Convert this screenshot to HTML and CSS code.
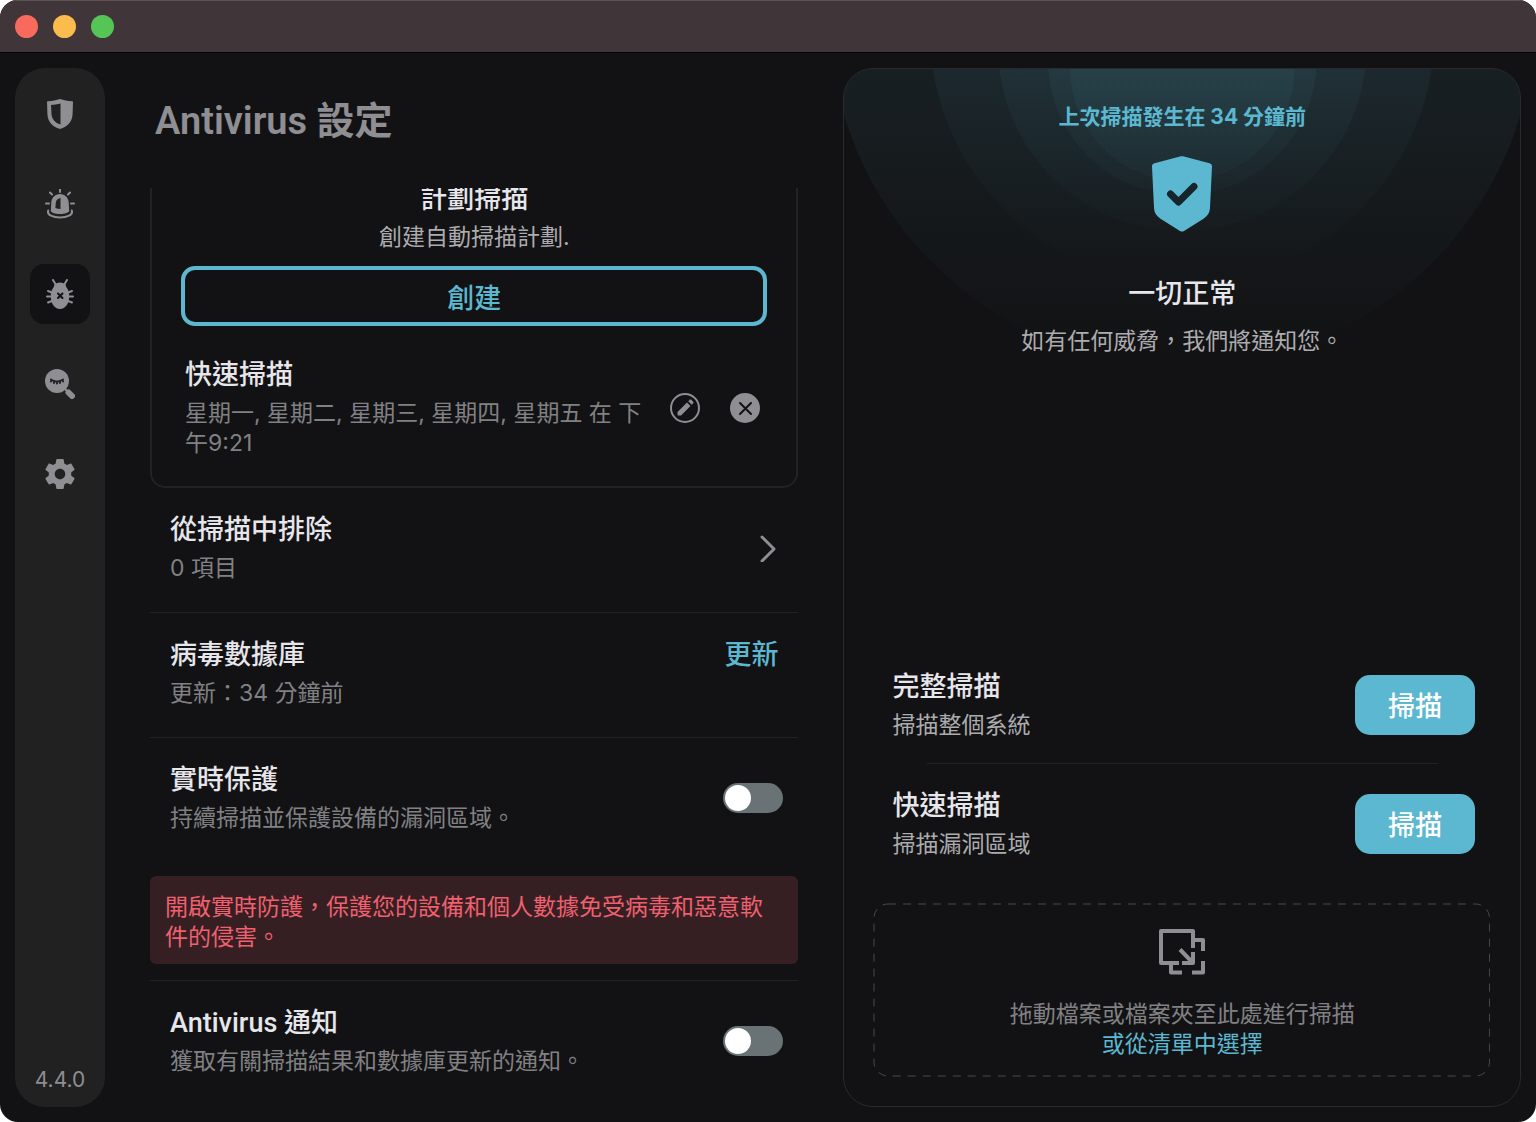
FILE: index.html
```html
<!DOCTYPE html>
<html lang="zh-Hant">
<head>
    <meta charset="UTF-8">
    <meta name="viewport" content="width=device-width, initial-scale=1.0">
    <title>Antivirus 設定</title>
    <link rel="stylesheet" href="styles.css">
</head>
<body>
    <div class="window">
        <header class="titlebar">
            <button type="button" class="light close" aria-label="關閉"></button>
            <button type="button" class="light minimize" aria-label="最小化"></button>
            <button type="button" class="light zoom" aria-label="縮放"></button>
        </header>
        <div class="content">
            <aside class="sidebar">
                <nav class="nav">
                    <a href="#protection" aria-label="保護">
                        <svg width="30" height="30" viewBox="0 0 30 30" fill="currentColor">
                            <path fill-rule="evenodd" d="M15 0C18.500 1.300 23 2 27.200 2.200c.5 0 .8.400.8.800L27.600 15c-.3 7.500-4.800 13-12.600 15C7.200 28 2.700 22.500 2.400 15L2 3c0-.4.300-.8.800-.8C7 2 11.500 1.300 15 0zM15.500 4.500C12.500 5.300 9 5.800 6 6l.5 9c.3 5 3.500 9 9 10.500z"/>
                        </svg>
                    </a>
                    <a href="#alerts" aria-label="警報">
                        <svg width="30" height="30" viewBox="0 0 30 30" fill="none" stroke="currentColor" stroke-width="2" stroke-linecap="round">
                            <path fill="currentColor" fill-rule="evenodd" stroke="none" d="M15 5c5 0 8.500 3.800 8.700 8.500L24.200 22c0 1.500-4.200 3-9.200 3s-9.200-1.500-9.200-3l.5-8.500C6.500 8.800 10 5 15 5zM15.500 9c-3 .5-4.700 2.500-4.800 5.500l-.3 4.500c1.500.7 3.200 1 5.100 1z"/>
                            <path d="M3.200 21.500c-1.500 4.500 4.800 7 11.800 7s13.300-2.500 11.800-7M15 0v3M1 14.500h3M26 14.500h3M5 3.500l2 2M25 3.500l-2 2"/>
                        </svg>
                    </a>
                    <a href="#antivirus" class="active" aria-label="Antivirus" aria-current="page">
                        <svg width="30" height="30" viewBox="0 0 30 30" fill="none" stroke="currentColor" stroke-width="2" stroke-linecap="round">
                            <path fill="currentColor" stroke="none" d="M9.500 5.500c1.500-1.300 3.500-2 5.500-2s4 .7 5.500 2l1 3c2 2 2.700 5 2.700 8.500 0 7.500-3.700 13-9.200 13s-9.200-5.500-9.200-13c0-3.500.7-6.500 2.700-8.500z"/>
                            <path d="M8 1l3 5M22 1l-3 5M3 12l5 2M27 12l-5 2M2 17.500h4M28 17.500h-4M3 23.500l4-1.500M27 23.500l-4-1.500"/>
                            <path class="cut" d="M13 14.500l4.500 4.500M17.500 14.500l-4.500 4.500"/>
                        </svg>
                    </a>
                    <a href="#privacy" aria-label="隱私">
                        <svg width="30" height="30" viewBox="0 0 30 30" fill="none" stroke="currentColor" stroke-linecap="round">
                            <circle cx="12" cy="12" r="12" fill="currentColor" stroke="none"/>
                            <path stroke-width="2" d="M19 19l3 3"/>
                            <path stroke-width="6" d="M23.500 23.500l3.500 3.500"/>
                            <path class="cut dark" d="M6 10.500c3.500 2.500 8.500 2.500 12 0M6.500 11l-.5 1.500M9.500 12l-.5 2M12 12.500v2M14.500 12l.5 2M17.500 11l.5 1.500"/>
                        </svg>
                    </a>
                    <a href="#settings" aria-label="設定">
                        <svg width="30" height="30" viewBox="2 2 20 20" fill="currentColor">
                            <path d="M19.430 12.980c.04-.32.07-.64.07-.98s-.03-.66-.07-.98l2.110-1.650c.19-.15.24-.42.12-.64l-2-3.460c-.12-.22-.39-.3-.61-.22l-2.490 1c-.52-.4-1.080-.73-1.690-.98l-.38-2.650C14.460 2.180 14.250 2 14 2h-4c-.25 0-.46.18-.49.42l-.38 2.650c-.61.25-1.170.59-1.690.98l-2.490-1c-.23-.09-.49 0-.61.22l-2 3.460c-.13.22-.07.49.12.64l2.110 1.650c-.04.32-.07.65-.07.98s.03.66.07.98l-2.110 1.650c-.19.15-.24.42-.12.64l2 3.460c.12.22.39.3.61.22l2.490-1c.52.4 1.080.73 1.690.98l.38 2.650c.03.24.24.42.49.42h4c.25 0 .46-.18.49-.42l.38-2.650c.61-.25 1.170-.59 1.690-.98l2.490 1c.23.09.49 0 .61-.22l2-3.460c.12-.22.07-.49-.12-.64l-2.110-1.650zM12 15.500c-1.930 0-3.500-1.570-3.500-3.500s1.570-3.500 3.500-3.500 3.500 1.570 3.500 3.500-1.570 3.500-3.500 3.500z"/>
                        </svg>
                    </a>
                </nav>
                <span class="version">4.4.0</span>
            </aside>

            <main class="settings">
                <h1>Antivirus 設定</h1>
                <div class="settings-list">
                    <section class="schedule">
                        <div class="schedule-intro">
                            <h2 class="title">計劃掃描</h2>
                            <p class="text light-text">創建自動掃描計劃.</p>
                        </div>
                        <button type="button" class="create-button">創建</button>
                        <div class="schedule-item">
                            <div class="labels">
                                <h2 class="title">快速掃描</h2>
                                <p class="text">星期一, 星期二, 星期三, 星期四, 星期五 在 下午9:21</p>
                            </div>
                            <button type="button" class="icon-button" aria-label="編輯">
                                <svg width="30" height="30" viewBox="0 0 30 30">
                                    <circle cx="15" cy="15" r="14" fill="none" stroke="currentColor" stroke-width="2"/>
                                    <path fill="currentColor" d="M7.500 19l9.500-9.500 3.500 3.500-9.500 9.500H8.500c-.6 0-1-.4-1-1zM18.200 8.300l1.300-1.300c.6-.6 1.300-.6 1.900 0l1.600 1.600c.6.600.6 1.300 0 1.900L21.700 11.800z"/>
                                </svg>
                            </button>
                            <button type="button" class="icon-button" aria-label="刪除">
                                <svg width="30" height="30" viewBox="0 0 30 30">
                                    <circle cx="15" cy="15" r="15" fill="currentColor"/>
                                    <path d="M10 10l11 11M21 10l-11 11" fill="none" stroke="#121214" stroke-width="2" stroke-linecap="round"/>
                                </svg>
                            </button>
                        </div>
                    </section>

                    <a href="#exclusions" class="row">
                        <span class="labels">
                            <span class="title">從掃描中排除</span>
                            <span class="text">0 項目</span>
                        </span>
                        <svg class="chevron" width="16" height="28" viewBox="0 0 16 28">
                            <path d="M2 3l12 12L2 27" fill="none" stroke="currentColor" stroke-width="3" stroke-linecap="round" stroke-linejoin="round"/>
                        </svg>
                    </a>
                    <div class="row row-top">
                        <div class="labels">
                            <h2 class="title">病毒數據庫</h2>
                            <p class="text">更新：34 分鐘前</p>
                        </div>
                        <a href="#update" class="title update-link">更新</a>
                    </div>
                    <div class="row">
                        <label class="labels" for="realtime">
                            <span class="title">實時保護</span>
                            <span class="text">持續掃描並保護設備的漏洞區域。</span>
                        </label>
                        <input type="checkbox" class="toggle" id="realtime">
                    </div>
                    <p class="text warning">開啟實時防護，保護您的設備和個人數據免受病毒和惡意軟件的侵害。</p>
                    <div class="row">
                        <label class="labels" for="notifications">
                            <span class="title">Antivirus 通知</span>
                            <span class="text">獲取有關掃描結果和數據庫更新的通知。</span>
                        </label>
                        <input type="checkbox" class="toggle" id="notifications">
                    </div>
                </div>
            </main>

            <section class="panel">
                <svg class="rings" viewBox="0 0 675 320" preserveAspectRatio="xMidYMin slice" aria-hidden="true">
                    <defs>
                        <linearGradient id="fade" gradientUnits="userSpaceOnUse" x1="0" y1="0" x2="0" y2="290">
                            <stop offset="0" stop-color="#5cb8d0" stop-opacity=".08"/>
                            <stop offset="1" stop-color="#5cb8d0" stop-opacity="0"/>
                        </linearGradient>
                        <linearGradient id="fade-inner" gradientUnits="userSpaceOnUse" x1="0" y1="0" x2="0" y2="200">
                            <stop offset="0" stop-color="#5cb8d0" stop-opacity=".06"/>
                            <stop offset="1" stop-color="#5cb8d0" stop-opacity="0"/>
                        </linearGradient>
                    </defs>
                    <circle cx="338" cy="-56" r="353" fill="url(#fade)"/>
                    <circle cx="338" cy="-38" r="252" fill="url(#fade-inner)"/>
                    <circle cx="338" cy="-22" r="184" fill="url(#fade-inner)"/>
                    <circle cx="338" cy="-8" r="134" fill="url(#fade-inner)"/>
                    <circle cx="338" cy="0" r="112" fill="url(#fade-inner)"/>
                </svg>
                <div class="status">
                    <p class="last-scan">上次掃描發生在 34 分鐘前</p>
                    <svg class="status-icon" width="60" height="76" viewBox="0 0 60 76">
                        <path fill="#5cb8d0" d="M28 .5c1.300-.5 2.700-.5 4 0L57.500 7.200c1.700.5 2.600 1.700 2.500 3.400L58 52c-.3 5-2.500 8-6.500 10.700L32 75c-1.300.7-2.700.7-4 0L8.500 62.700C4.500 60 2.300 57 2 52L0 10.600C-.1 8.900.8 7.700 2.500 7.200z"/>
                        <path d="M18.500 38l8 8L42 30.500" fill="none" stroke="#16252b" stroke-width="7" stroke-linecap="round" stroke-linejoin="round"/>
                    </svg>
                    <h2 class="title">一切正常</h2>
                    <p class="text light-text">如有任何威脅，我們將通知您。</p>
                </div>
                <div class="scans">
                    <div class="scan">
                        <div class="labels">
                            <h2 class="title">完整掃描</h2>
                            <p class="text light-text">掃描整個系統</p>
                        </div>
                        <button type="button" class="scan-button">掃描</button>
                    </div>
                    <hr>
                    <div class="scan">
                        <div class="labels">
                            <h2 class="title">快速掃描</h2>
                            <p class="text light-text">掃描漏洞區域</p>
                        </div>
                        <button type="button" class="scan-button">掃描</button>
                    </div>
                </div>
                <div class="dropzone">
                    <svg class="dashes" aria-hidden="true">
                        <rect x="1" y="1" rx="14" fill="none" stroke="#48484b" stroke-width="1" stroke-dasharray="8 7"/>
                    </svg>
                    <svg width="46" height="46" viewBox="0 0 46 46" fill="none" stroke="#8e8e93" stroke-width="4" stroke-linejoin="round">
                        <path d="M20 34H2V2h32v17M34 23v11H23M34 34L21 20.500M36 11h8v11M12 35v8.500h11M33 43.500h11V32"/>
                    </svg>
                    <p class="text">拖動檔案或檔案夾至此處進行掃描</p>
                    <a href="#choose" class="text choose-link">或從清單中選擇</a>
                </div>
            </section>
        </div>
    </div>
</body>
</html>
```

FILE: styles.css
```css
* {
    box-sizing: border-box;
}
body {
    margin: 0;
    background-color: #fff;
    color: #e6e6eb;
    font-family: Inter, "Noto Sans CJK TC", sans-serif;
}
h1, h2, p {
    margin: 0;
}
a {
    color: inherit;
    text-decoration: none;
}
button {
    padding: 0;
    border: none;
    background: none;
    font-family: inherit;
    cursor: pointer;
}
svg {
    display: block;
    flex-shrink: 0;
}
.window {
    min-height: 100vh;
    display: flex;
    flex-direction: column;
    border-radius: 18px;
    overflow: hidden;
    background-color: #121214;
}

/* title bar */
.titlebar {
    height: 53px;
    display: flex;
    align-items: center;
    gap: 15px;
    padding: 0 15px;
    background-color: #403538;
    border-top: 1px solid #5d5356;
    border-bottom: 1px solid #000;
}
.light {
    width: 23px;
    height: 23px;
    border-radius: 50%;
}
.close {
    background-color: #f96a5e;
}
.minimize {
    background-color: #fabd4d;
}
.zoom {
    background-color: #55c655;
}
.content {
    flex: 1;
    display: grid;
    grid-template-columns: 90px 648fr 677fr;
    gap: 45px;
    padding: 15px;
}

/* sidebar */
.sidebar {
    display: flex;
    flex-direction: column;
    justify-content: space-between;
    align-items: center;
    padding: 16px 0 14px;
    border-radius: 30px;
    background-color: #212121;
    color: #8e8e93;
}
.nav {
    display: flex;
    flex-direction: column;
    gap: 30px;
}
.nav a {
    width: 60px;
    height: 60px;
    display: flex;
    align-items: center;
    justify-content: center;
    border-radius: 14px;
}
.nav .active {
    background-color: #121214;
}
.cut {
    stroke: #121214;
    stroke-width: 2;
}
.cut.dark {
    stroke: #212121;
}
.version {
    font-size: 21px;
    line-height: 26px;
}

/* shared text */
h1, .title {
    font-family: Roboto, "Noto Sans CJK TC", sans-serif;
}
.title {
    font-size: 27px;
    font-weight: 500;
    line-height: 36px;
}
.text {
    font-size: 23px;
    font-weight: 400;
    line-height: 30px;
    color: #818184;
}
.light-text {
    color: #acacaf;
}
.labels {
    flex: 1;
    display: flex;
    flex-direction: column;
    gap: 5px;
}

/* settings */
.settings {
    display: flex;
    flex-direction: column;
}
h1 {
    height: 120px;
    padding: 28px 5px 0;
    font-size: 38px;
    font-weight: 600;
    line-height: 50px;
    color: #8e8e93;
}
.settings-list {
    flex: 1;
    overflow: hidden;
}
.schedule {
    margin-top: -40px;
    padding: 31px 29px 28px;
    border: 2px solid #222225;
    border-radius: 15px;
}
.schedule-intro {
    display: flex;
    flex-direction: column;
    align-items: center;
    gap: 5px;
}
.create-button {
    width: 100%;
    height: 60px;
    margin: 14px 0 31px;
    border: 4px solid #5cb8d0;
    border-radius: 14px;
    color: #5cb8d0;
    font-size: 27px;
    font-weight: 500;
}
.schedule-item {
    display: flex;
    align-items: center;
    gap: 30px;
    padding: 0 7px 0 4px;
}
.schedule-item .labels + .icon-button {
    margin-left: -15px;
}
.icon-button {
    color: #8e8e93;
}
.row {
    display: flex;
    align-items: center;
    padding: 24px 15px 29px 20px;
}
.row + .row, .warning + .row {
    border-top: 1px solid #222225;
}
.row-top {
    align-items: flex-start;
}
.chevron {
    margin-right: 7px;
    color: #8e8e93;
}
.update-link {
    margin-right: 5px;
    color: #5cb8d0;
}
.toggle {
    appearance: none;
    width: 60px;
    height: 30px;
    margin: 0;
    padding: 2px;
    border-radius: 15px;
    background-color: #697275;
    cursor: pointer;
}
.toggle::before {
    content: "";
    display: block;
    width: 26px;
    height: 26px;
    border-radius: 50%;
    background-color: #fff;
}
.toggle:checked {
    background-color: #5cb8d0;
}
.toggle:checked::before {
    margin-left: auto;
}
.warning {
    margin: 14px 0 16px;
    padding: 16px 15px 12px;
    border-radius: 6px;
    background-color: #351f23;
    color: #f0606e;
}

/* scan panel */
.panel {
    position: relative;
    display: flex;
    flex-direction: column;
    padding: 33px 29px 29px;
    border: 1px solid #2a2a2d;
    border-radius: 30px;
    overflow: hidden;
}
.rings {
    position: absolute;
    top: 0;
    left: 0;
    width: 100%;
    height: 320px;
}
.status {
    position: relative;
    display: flex;
    flex-direction: column;
    align-items: center;
}
.last-scan {
    font-size: 21px;
    font-weight: 700;
    line-height: 30px;
    color: #5cb8d0;
}
.status-icon {
    margin: 24px 0 44px;
}
.status .text {
    margin-top: 14px;
}
.scans {
    margin-top: auto;
    padding: 0 16px 0 19px;
}
.scan {
    display: flex;
    align-items: center;
}
.scan-button {
    width: 120px;
    height: 60px;
    border-radius: 15px;
    background-color: #5cb8d0;
    color: #fff;
    font-size: 27px;
    font-weight: 500;
}
hr {
    margin: 23px 37px 24px 35px;
    border: none;
    border-top: 1px solid #222225;
}
.dropzone {
    position: relative;
    display: flex;
    flex-direction: column;
    align-items: center;
    margin-top: 44px;
    padding: 26px 0 18px;
}
.dropzone .text {
    text-align: center;
}
.dropzone p {
    margin-top: 24px;
}
.dashes {
    position: absolute;
    top: 0;
    left: 0;
    width: 100%;
    height: 100%;
}
.dashes rect {
    width: calc(100% - 2px);
    height: calc(100% - 2px);
}
.dropzone .choose-link {
    position: relative;
    color: #5cb8d0;
}
```
